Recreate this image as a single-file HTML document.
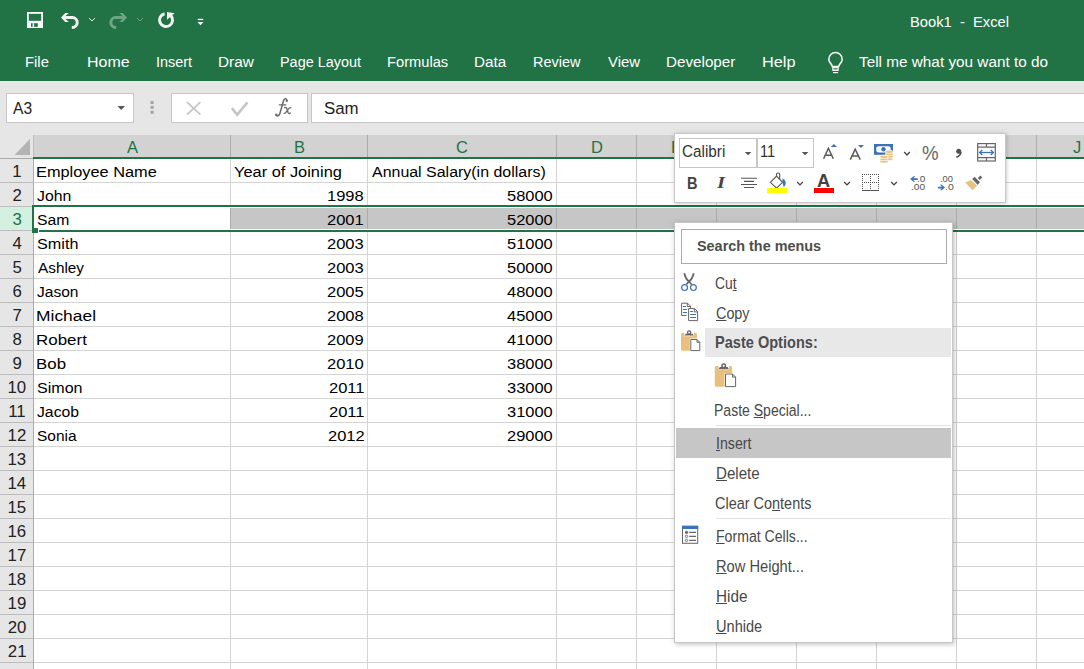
<!DOCTYPE html>
<html><head><meta charset="utf-8"><style>
html,body{margin:0;padding:0;width:1084px;height:669px;overflow:hidden;background:#fff;}
body{position:relative;font-family:"Liberation Sans",sans-serif;}
.a{position:absolute;}
.t{position:absolute;white-space:nowrap;line-height:1;transform-origin:0 0;}
u{text-decoration:underline;text-decoration-thickness:1px;text-underline-offset:1px;}
svg{overflow:visible}
</style></head><body>
<div class="a" style="left:0px;top:0px;width:1084px;height:81px;background:#217346;"></div>
<div class="a" style="left:0px;top:81px;width:1084px;height:54px;background:#e6e6e6;"></div>
<div class="a" style="left:6px;top:93px;width:128px;height:30px;background:#fff;box-sizing:border-box;border:1px solid #c6c6c6"></div>
<div class="a" style="left:171px;top:93px;width:137px;height:30px;background:#fff;box-sizing:border-box;border:1px solid #c6c6c6"></div>
<div class="a" style="left:311px;top:93px;width:789px;height:30px;background:#fff;box-sizing:border-box;border:1px solid #c6c6c6"></div>
<div class="a" style="left:0px;top:135px;width:1084px;height:534px;background:#fff;"></div>
<div class="a" style="left:0px;top:135px;width:33px;height:24px;background:#e6e6e6;"></div>
<div class="a" style="left:33px;top:135px;width:1051px;height:22px;background:#d2d2d2;"></div>
<div class="a" style="left:33px;top:157px;width:1051px;height:2px;background:#217346;"></div>
<div class="a" style="left:0px;top:159px;width:33px;height:510px;background:#e6e6e6;"></div>
<div class="a" style="left:0px;top:207px;width:33px;height:23px;background:#d3f0e0;"></div>
<div class="a" style="left:33px;top:135px;width:1px;height:22px;background:#bdbdbd;"></div>
<div class="a" style="left:33px;top:159px;width:1px;height:510px;background:#ababab;"></div>
<div class="a" style="left:0px;top:158px;width:33px;height:1px;background:#ababab;"></div>
<div class="a" style="left:230px;top:208px;width:854px;height:21px;background:#c6c6c6;"></div>
<div class="a" style="left:34px;top:182px;width:1050px;height:1px;background:#d4d4d4;"></div>
<div class="a" style="left:0px;top:182px;width:33px;height:1px;background:#bcbcbc;"></div>
<div class="a" style="left:34px;top:206px;width:1050px;height:1px;background:#d4d4d4;"></div>
<div class="a" style="left:0px;top:206px;width:33px;height:1px;background:#bcbcbc;"></div>
<div class="a" style="left:34px;top:230px;width:1050px;height:1px;background:#d4d4d4;"></div>
<div class="a" style="left:0px;top:230px;width:33px;height:1px;background:#bcbcbc;"></div>
<div class="a" style="left:34px;top:254px;width:1050px;height:1px;background:#d4d4d4;"></div>
<div class="a" style="left:0px;top:254px;width:33px;height:1px;background:#bcbcbc;"></div>
<div class="a" style="left:34px;top:278px;width:1050px;height:1px;background:#d4d4d4;"></div>
<div class="a" style="left:0px;top:278px;width:33px;height:1px;background:#bcbcbc;"></div>
<div class="a" style="left:34px;top:302px;width:1050px;height:1px;background:#d4d4d4;"></div>
<div class="a" style="left:0px;top:302px;width:33px;height:1px;background:#bcbcbc;"></div>
<div class="a" style="left:34px;top:326px;width:1050px;height:1px;background:#d4d4d4;"></div>
<div class="a" style="left:0px;top:326px;width:33px;height:1px;background:#bcbcbc;"></div>
<div class="a" style="left:34px;top:350px;width:1050px;height:1px;background:#d4d4d4;"></div>
<div class="a" style="left:0px;top:350px;width:33px;height:1px;background:#bcbcbc;"></div>
<div class="a" style="left:34px;top:374px;width:1050px;height:1px;background:#d4d4d4;"></div>
<div class="a" style="left:0px;top:374px;width:33px;height:1px;background:#bcbcbc;"></div>
<div class="a" style="left:34px;top:398px;width:1050px;height:1px;background:#d4d4d4;"></div>
<div class="a" style="left:0px;top:398px;width:33px;height:1px;background:#bcbcbc;"></div>
<div class="a" style="left:34px;top:422px;width:1050px;height:1px;background:#d4d4d4;"></div>
<div class="a" style="left:0px;top:422px;width:33px;height:1px;background:#bcbcbc;"></div>
<div class="a" style="left:34px;top:446px;width:1050px;height:1px;background:#d4d4d4;"></div>
<div class="a" style="left:0px;top:446px;width:33px;height:1px;background:#bcbcbc;"></div>
<div class="a" style="left:34px;top:470px;width:1050px;height:1px;background:#d4d4d4;"></div>
<div class="a" style="left:0px;top:470px;width:33px;height:1px;background:#bcbcbc;"></div>
<div class="a" style="left:34px;top:494px;width:1050px;height:1px;background:#d4d4d4;"></div>
<div class="a" style="left:0px;top:494px;width:33px;height:1px;background:#bcbcbc;"></div>
<div class="a" style="left:34px;top:518px;width:1050px;height:1px;background:#d4d4d4;"></div>
<div class="a" style="left:0px;top:518px;width:33px;height:1px;background:#bcbcbc;"></div>
<div class="a" style="left:34px;top:542px;width:1050px;height:1px;background:#d4d4d4;"></div>
<div class="a" style="left:0px;top:542px;width:33px;height:1px;background:#bcbcbc;"></div>
<div class="a" style="left:34px;top:566px;width:1050px;height:1px;background:#d4d4d4;"></div>
<div class="a" style="left:0px;top:566px;width:33px;height:1px;background:#bcbcbc;"></div>
<div class="a" style="left:34px;top:590px;width:1050px;height:1px;background:#d4d4d4;"></div>
<div class="a" style="left:0px;top:590px;width:33px;height:1px;background:#bcbcbc;"></div>
<div class="a" style="left:34px;top:614px;width:1050px;height:1px;background:#d4d4d4;"></div>
<div class="a" style="left:0px;top:614px;width:33px;height:1px;background:#bcbcbc;"></div>
<div class="a" style="left:34px;top:638px;width:1050px;height:1px;background:#d4d4d4;"></div>
<div class="a" style="left:0px;top:638px;width:33px;height:1px;background:#bcbcbc;"></div>
<div class="a" style="left:34px;top:662px;width:1050px;height:1px;background:#d4d4d4;"></div>
<div class="a" style="left:0px;top:662px;width:33px;height:1px;background:#bcbcbc;"></div>
<div class="a" style="left:230px;top:159px;width:1px;height:510px;background:#d4d4d4;"></div>
<div class="a" style="left:230px;top:135px;width:1px;height:22px;background:#ababab;"></div>
<div class="a" style="left:367px;top:159px;width:1px;height:510px;background:#d4d4d4;"></div>
<div class="a" style="left:367px;top:135px;width:1px;height:22px;background:#ababab;"></div>
<div class="a" style="left:556px;top:159px;width:1px;height:510px;background:#d4d4d4;"></div>
<div class="a" style="left:556px;top:135px;width:1px;height:22px;background:#ababab;"></div>
<div class="a" style="left:636px;top:159px;width:1px;height:510px;background:#d4d4d4;"></div>
<div class="a" style="left:636px;top:135px;width:1px;height:22px;background:#ababab;"></div>
<div class="a" style="left:716px;top:159px;width:1px;height:510px;background:#d4d4d4;"></div>
<div class="a" style="left:716px;top:135px;width:1px;height:22px;background:#ababab;"></div>
<div class="a" style="left:796px;top:159px;width:1px;height:510px;background:#d4d4d4;"></div>
<div class="a" style="left:796px;top:135px;width:1px;height:22px;background:#ababab;"></div>
<div class="a" style="left:876px;top:159px;width:1px;height:510px;background:#d4d4d4;"></div>
<div class="a" style="left:876px;top:135px;width:1px;height:22px;background:#ababab;"></div>
<div class="a" style="left:956px;top:159px;width:1px;height:510px;background:#d4d4d4;"></div>
<div class="a" style="left:956px;top:135px;width:1px;height:22px;background:#ababab;"></div>
<div class="a" style="left:1036px;top:159px;width:1px;height:510px;background:#d4d4d4;"></div>
<div class="a" style="left:1036px;top:135px;width:1px;height:22px;background:#ababab;"></div>
<div class="a" style="left:230px;top:207px;width:1px;height:23px;background:#fff;"></div>
<div class="a" style="left:230px;top:208px;width:1px;height:21px;background:#ababab;"></div>
<div class="a" style="left:367px;top:207px;width:1px;height:23px;background:#fff;"></div>
<div class="a" style="left:367px;top:208px;width:1px;height:21px;background:#ababab;"></div>
<div class="a" style="left:556px;top:207px;width:1px;height:23px;background:#fff;"></div>
<div class="a" style="left:556px;top:208px;width:1px;height:21px;background:#ababab;"></div>
<div class="a" style="left:636px;top:207px;width:1px;height:23px;background:#fff;"></div>
<div class="a" style="left:636px;top:208px;width:1px;height:21px;background:#ababab;"></div>
<div class="a" style="left:716px;top:207px;width:1px;height:23px;background:#fff;"></div>
<div class="a" style="left:716px;top:208px;width:1px;height:21px;background:#ababab;"></div>
<div class="a" style="left:796px;top:207px;width:1px;height:23px;background:#fff;"></div>
<div class="a" style="left:796px;top:208px;width:1px;height:21px;background:#ababab;"></div>
<div class="a" style="left:876px;top:207px;width:1px;height:23px;background:#fff;"></div>
<div class="a" style="left:876px;top:208px;width:1px;height:21px;background:#ababab;"></div>
<div class="a" style="left:956px;top:207px;width:1px;height:23px;background:#fff;"></div>
<div class="a" style="left:956px;top:208px;width:1px;height:21px;background:#ababab;"></div>
<div class="a" style="left:1036px;top:207px;width:1px;height:23px;background:#fff;"></div>
<div class="a" style="left:1036px;top:208px;width:1px;height:21px;background:#ababab;"></div>
<div class="a" style="left:32px;top:205px;width:1052px;height:2px;background:#217346;"></div>
<div class="a" style="left:32px;top:230px;width:1052px;height:2px;background:#217346;"></div>
<div class="a" style="left:32px;top:205px;width:2px;height:27px;background:#217346;"></div>
<div class="a" style="left:38px;top:228px;width:1px;height:5px;background:#fff;"></div>
<div class="a" style="left:32px;top:228px;width:6px;height:5px;background:#217346;"></div>
<svg class="a" style="left:0;top:135px" width="33" height="24"><polygon points="14.5,20 30,4 30,20" fill="#b4b4b4"/></svg>
<div class="a" style="left:674px;top:133px;width:332px;height:70px;background:#fff;z-index:9;box-sizing:border-box;border:1px solid #c8c8c8;box-shadow:0 0 6px rgba(0,0,0,0.10),1px 1px 3px rgba(0,0,0,0.12)"></div>
<div class="a" style="left:679px;top:138px;width:78px;height:30px;background:#fff;z-index:9;box-sizing:border-box;border:1px solid #c6c6c6"></div>
<div class="a" style="left:757px;top:138px;width:57px;height:30px;background:#fff;z-index:9;box-sizing:border-box;border:1px solid #c6c6c6"></div>
<div class="a" style="left:674px;top:222px;width:279px;height:421px;background:#fff;z-index:9;box-sizing:border-box;border:1px solid #c6c6c6;box-shadow:0 0 6px rgba(0,0,0,0.10),2px 2px 4px rgba(0,0,0,0.15)"></div>
<div class="a" style="left:681px;top:229px;width:266px;height:35px;background:#fff;z-index:9;box-sizing:border-box;border:1px solid #ababab"></div>
<div class="a" style="left:705px;top:328px;width:246px;height:29px;background:#e8e8e8;z-index:9"></div>
<div class="a" style="left:676px;top:428px;width:275px;height:30px;background:#c6c6c6;z-index:9"></div>
<div class="a" style="left:716px;top:425px;width:235px;height:1px;background:#e1e1e1;z-index:9"></div>
<div class="a" style="left:716px;top:518px;width:235px;height:1px;background:#e1e1e1;z-index:9"></div>
<svg class="a" style="left:0;top:0;z-index:2" width="1084" height="135" viewBox="0 0 1084 135">
<!-- save -->
<rect x="27.9" y="12.9" width="14.2" height="14.2" fill="none" stroke="#fff" stroke-width="1.8"/>
<rect x="28.5" y="20.8" width="13" height="6.5" fill="#fff"/>
<rect x="31" y="23.2" width="6.8" height="3.6" fill="#217346"/>
<rect x="32.6" y="23.2" width="1.5" height="3.6" fill="#fff"/>
<!-- undo -->
<polygon points="61,17.5 65.2,13.1 68.8,13.1 65.5,16 65.5,19 68.8,21.9 65.2,21.9" fill="#f2f2f2"/>
<path d="M64.5 17.6 H72.3 A4.9 4.9 0 0 1 72.3 27.4 H71.8" fill="none" stroke="#f2f2f2" stroke-width="3"/>
<path d="M89 18 L92 21 L95 18" fill="none" stroke="#e6e6e6" stroke-width="1"/>
<!-- redo faded -->
<g opacity="0.35">
<polygon points="127,17.5 122.8,13.1 119.2,13.1 122.5,16 122.5,19 119.2,21.9 122.8,21.9" fill="#fff"/>
<path d="M123.5 17.6 H115.7 A4.9 4.9 0 0 0 115.7 27.4 H116.2" fill="none" stroke="#fff" stroke-width="3"/>
<path d="M137 18 L140 21 L143 18" fill="none" stroke="#fff" stroke-width="1"/>
</g>
<!-- refresh -->
<path d="M164.6 13.7 A6.5 6.5 0 1 0 170.6 15.4" fill="none" stroke="#f2f2f2" stroke-width="3"/>
<polygon points="167,12.1 174.6,13.3 167,19.8" fill="#f2f2f2"/>
<!-- customize -->
<rect x="197.7" y="18.8" width="5.6" height="1.3" fill="#fff"/>
<polygon points="197.5,22 203.5,22 200.5,25.2" fill="#fff"/>
<!-- bulb -->
<g transform="translate(0,1)"><path d="M832.3 65.5 C832 63 828.8 61.5 828.8 58.2 A6.7 6.7 0 0 1 842.2 58.2 C842.2 61.5 839 63 838.7 65.5 Z" fill="none" stroke="#f2f2f2" stroke-width="1.6"/>
<rect x="832.2" y="66" width="6.6" height="4" fill="#f2f2f2"/>
<rect x="833.5" y="67.3" width="4" height="1.1" fill="#217346"/>
<rect x="833" y="71" width="5" height="1.2" fill="#f2f2f2"/>
</g>
<!-- name box dropdown -->
<polygon points="117.5,106 125,106 121.25,110" fill="#555"/>
<!-- dots -->
<rect x="150.5" y="101" width="3.2" height="3" fill="#a6a6a6"/>
<rect x="150.5" y="105.8" width="3.2" height="3" fill="#a6a6a6"/>
<rect x="150.5" y="110.8" width="3.2" height="3" fill="#a6a6a6"/>
<!-- X -->
<path d="M187 102.2 L200.4 114.6 M200.4 102.2 L187 114.6" stroke="#c6c6c6" stroke-width="1.8"/>
<!-- check -->
<path d="M231.8 108.2 L237.2 114.6 L247.4 102.3" fill="none" stroke="#c6c6c6" stroke-width="2.6"/>
</svg>
<svg class="a" style="left:0;top:0;z-index:2" width="400" height="135" viewBox="0 0 400 135">
<g fill="none" stroke="#6a6a6a" stroke-linecap="round">
<path d="M287 100.8 C286.8 98.5 284.6 97.9 283.6 100.6 L279.8 113.8 C279.2 116.2 276.6 116.5 276 114.8" stroke-width="1.5"/>
<path d="M279.3 104.9 H285.8" stroke-width="1.2"/>
<path d="M284.6 107.6 Q286.6 107.1 287.1 109.2 L287.9 112.2 Q288.5 114.2 290.2 113.1" stroke-width="1.4"/>
<path d="M290.9 107.8 Q289.7 107.3 287.8 109.9 L285.6 112.6 Q284.9 113.6 284.1 113.2" stroke-width="1.2"/>
</g>
<circle cx="286.7" cy="100.9" r="1.1" fill="#6a6a6a"/>
<circle cx="276.3" cy="114.6" r="1.2" fill="#6a6a6a"/>
</svg>
<svg class="a" style="left:0;top:0;z-index:11" width="1084" height="669" viewBox="0 0 1084 669">
<!-- dropdown triangles -->
<polygon points="744.8,152 751.4,152 748.1,155.3" fill="#555"/>
<polygon points="801.8,152 808.4,152 805.1,155.3" fill="#555"/>
<!-- grow/shrink A -->
<path d="M823.6 158.8 L828.4 148.3 L833.3 158.8 M825.3 155.2 H831.6" fill="none" stroke="#595959" stroke-width="1.5"/>
<polygon points="830.8,146.9 837,146.9 833.9,143.9" fill="#3b73b6"/>
<path d="M850.3 159.6 L855.2 149.2 L860.2 159.6 M852 156 H858.5" fill="none" stroke="#595959" stroke-width="1.5"/>
<polygon points="858,145.1 864,145.1 861,148" fill="#3b73b6"/>
<!-- accounting -->
<rect x="874" y="144" width="19" height="10.8" fill="#3b73b6"/>
<path d="M876.3 147.5 Q877.5 146.2 879 146.2 H888 Q889.5 146.2 890.6 147.5 V151.3 Q889.5 152.6 888 152.6 H879 Q877.5 152.6 876.3 151.3 Z" fill="#fff"/>
<circle cx="883.5" cy="149.3" r="2.2" fill="#3b73b6"/>
<g fill="#e8c17e" stroke="#fff" stroke-width="0.7">
<ellipse cx="889.2" cy="159" rx="4" ry="1.6"/>
<ellipse cx="889.2" cy="156.6" rx="4" ry="1.6"/>
<ellipse cx="889.2" cy="154.2" rx="4" ry="1.6"/>
<ellipse cx="889.2" cy="151.8" rx="4" ry="1.6"/>
<ellipse cx="884" cy="161.5" rx="4.2" ry="1.6"/>
<ellipse cx="884" cy="159.1" rx="4.2" ry="1.6"/>
<ellipse cx="884" cy="156.9" rx="4.2" ry="1.6"/>
</g>
<!-- chevrons -->
<g fill="none" stroke="#444" stroke-width="1.3">
<path d="M904.2 152 L907 155 L909.8 152"/>
<path d="M797.2 182 L800 184.9 L802.8 182"/>
<path d="M844.1 182 L847 184.9 L849.9 182"/>
<path d="M891.2 182 L894 184.9 L896.8 182"/>
</g>
<!-- wrap -->
<g fill="none" stroke="#666" stroke-width="1.2">
<rect x="977.7" y="143.6" width="17.6" height="17.4"/>
<path d="M977.7 147.2 H995.3 M977.7 157.7 H995.3 M986.5 143.6 V147.2 M986.5 157.7 V161"/>
</g>
<path d="M980 152.5 H993" stroke="#3b73b6" stroke-width="1.3"/>
<path d="M982.3 150 L979.6 152.5 L982.3 155 M990.7 150 L993.4 152.5 L990.7 155" fill="none" stroke="#3b73b6" stroke-width="1.3"/>
<!-- align center -->
<g stroke="#555" stroke-width="1.1">
<path d="M741 178.3 H757 M744 181.4 H754 M741 184.5 H757 M744 187.5 H754"/>
</g>
<!-- fill bucket -->
<polygon points="770.4,182.3 776.5,176 782.6,182.3 776.5,188.2" fill="#fff" stroke="#555" stroke-width="1.1"/>
<path d="M776.5 176 V174.6 A1.6 1.6 0 0 1 779.7 174.6 V179" fill="none" stroke="#555" stroke-width="1.1"/>
<path d="M782.5 178.6 Q786.5 180.5 785.5 184.5 L783.8 187.5 L782.5 182.3 Z" fill="#3b73b6"/>
<rect x="767" y="188" width="20" height="5" fill="#ffff00"/>
<!-- font color -->
<rect x="814" y="188" width="20" height="5" fill="#ff0000"/>
<!-- borders -->
<g fill="#555"><rect x="862" y="174" width="1" height="1"/><rect x="862" y="176" width="1" height="1"/><rect x="862" y="178" width="1" height="1"/><rect x="862" y="180" width="1" height="1"/><rect x="862" y="182" width="1" height="1"/><rect x="862" y="184" width="1" height="1"/><rect x="862" y="186" width="1" height="1"/><rect x="862" y="188" width="1" height="1"/><rect x="864" y="174" width="1" height="1"/><rect x="864" y="182" width="1" height="1"/><rect x="866" y="174" width="1" height="1"/><rect x="866" y="182" width="1" height="1"/><rect x="868" y="174" width="1" height="1"/><rect x="868" y="182" width="1" height="1"/><rect x="870" y="174" width="1" height="1"/><rect x="870" y="176" width="1" height="1"/><rect x="870" y="178" width="1" height="1"/><rect x="870" y="180" width="1" height="1"/><rect x="870" y="182" width="1" height="1"/><rect x="870" y="184" width="1" height="1"/><rect x="870" y="186" width="1" height="1"/><rect x="870" y="188" width="1" height="1"/><rect x="872" y="174" width="1" height="1"/><rect x="872" y="182" width="1" height="1"/><rect x="874" y="174" width="1" height="1"/><rect x="874" y="182" width="1" height="1"/><rect x="876" y="174" width="1" height="1"/><rect x="876" y="182" width="1" height="1"/><rect x="878" y="174" width="1" height="1"/><rect x="878" y="176" width="1" height="1"/><rect x="878" y="178" width="1" height="1"/><rect x="878" y="180" width="1" height="1"/><rect x="878" y="182" width="1" height="1"/><rect x="878" y="184" width="1" height="1"/><rect x="878" y="186" width="1" height="1"/><rect x="878" y="188" width="1" height="1"/><rect x="862" y="190" width="17" height="1"/></g>
<!-- decimal arrows -->
<g fill="#3b73b6">
<polygon points="910.2,179 913.5,176.2 915.3,176.2 913.3,178.2 917.8,178.2 917.8,179.9 913.3,179.9 915.3,181.8 913.5,181.8"/>
<polygon points="945,187.5 941.7,184.7 939.9,184.7 941.9,186.7 937.9,186.7 937.9,188.4 941.9,188.4 939.9,190.3 941.7,190.3"/>
</g>
<!-- comma -->
<circle cx="958.7" cy="151.3" r="2.5" fill="#505050"/>
<path d="M960.9 152 Q960.8 155.6 956.3 157.3" fill="none" stroke="#505050" stroke-width="1.7"/>
<!-- format painter -->
<polygon points="965.3,182.4 970.9,180.1 977.1,185.5 972.5,190.3" fill="#e8c17e"/>
<polygon points="972.2,178.9 974.6,176.8 980,182.3 977.6,184.7" fill="#666"/>
<polygon points="977.8,178.1 980.3,175.6 982.3,177.4 979.7,180" fill="#666"/>
<!-- scissors -->
<path d="M684.3 273.3 Q685.5 279 689 281.5 L686.2 284.5" fill="none" stroke="#666" stroke-width="1.8"/>
<path d="M693.7 273.3 Q692.5 279 689 281.5 L691.8 284.5" fill="none" stroke="#666" stroke-width="1.8"/>
<circle cx="684.6" cy="287.6" r="2.9" fill="none" stroke="#3b73b6" stroke-width="1.2"/>
<circle cx="693.4" cy="287.6" r="2.9" fill="none" stroke="#3b73b6" stroke-width="1.2"/>
<!-- copy -->
<path d="M686.5 315.5 H681.6 V303.2 H687.5 L690.6 306.3 V308.5" fill="none" stroke="#666" stroke-width="1"/>
<path d="M687.3 303.2 V306.5 H690.6" fill="none" stroke="#666" stroke-width="1"/>
<path d="M688.6 320.6 V308.6 H694.6 L697.6 311.6 V320.6 Z" fill="#fff" stroke="#666" stroke-width="1"/>
<path d="M694.3 308.6 V311.9 H697.6" fill="none" stroke="#666" stroke-width="1"/>
<g stroke="#3b73b6" stroke-width="1">
<path d="M683 306.5 H686 M683 309.5 H687 M683 312.5 H687"/>
<path d="M690.2 311.5 H693 M690.2 314.5 H696 M690.2 317.5 H696"/>
</g>
<!-- paste icon (left) -->
<path d="M681 334.2 Q681 332.8 682.3 332.8 H684.2 V336.2 H694 V332.8 H695.6 Q696.9 332.8 696.9 334.2 V350.8 H682.3 Q681 350.8 681 349.5 Z" fill="#e8bf7c"/>
<path d="M684.3 335.6 H693.9 L692.6 333.7 H685.6 Z" fill="#666"/>
<circle cx="689.1" cy="332.4" r="1.6" fill="#fff" stroke="#666" stroke-width="1.3"/>
<rect x="689.8" y="338.5" width="11" height="13" fill="#fff"/>
<path d="M690.8 350.6 V339.5 H697 L699.8 342.3 V350.6 Z" fill="#fff" stroke="#666" stroke-width="1"/>
<path d="M697 339.5 V342.3 H699.8" fill="none" stroke="#666" stroke-width="1"/>
<!-- paste option icon -->
<path d="M714.8 367.5 Q714.8 366 716.3 366 H718.4 V369.7 H729 V366 H730.7 Q732.2 366 732.2 367.5 V386.8 H716.3 Q714.8 386.8 714.8 385.3 Z" fill="#e8bf7c"/>
<path d="M718.4 369.2 H729 L727.6 367 H719.8 Z" fill="#666"/>
<circle cx="723.7" cy="365.8" r="1.8" fill="#fff" stroke="#666" stroke-width="1.4"/>
<rect x="724.5" y="373" width="12" height="14.8" fill="#fff"/>
<path d="M725.5 386.6 V374 H732.5 L735.6 377.1 V386.6 Z" fill="#fff" stroke="#666" stroke-width="1"/>
<path d="M732.5 374 V377.1 H735.6" fill="none" stroke="#666" stroke-width="1"/>
<!-- format cells -->
<rect x="682.5" y="526.3" width="15.2" height="17" fill="#fff" stroke="#666" stroke-width="1"/>
<rect x="682" y="525.8" width="16.2" height="3.2" fill="#3b73b6"/>
<g fill="none" stroke="#666" stroke-width="0.9">
<circle cx="686.5" cy="532.4" r="1.2" fill="#666"/>
<circle cx="686.5" cy="536.4" r="1.2"/>
<circle cx="686.5" cy="540.4" r="1.2"/>
<path d="M689.2 532.4 H696 M689.2 536.4 H696 M689.2 540.4 H696" stroke-width="1.1"/>
</g>
</svg>

<span class="t" style="left:910.12px;top:13.94px;font-size:15.51px;color:#ffffff;z-index:1;transform:scaleX(0.9496)">Book1&nbsp; -&nbsp; Excel</span>
<span class="t" style="left:24.51px;top:53.64px;font-size:15.51px;color:#ffffff;z-index:1;transform:scaleX(0.9565)">File</span>
<span class="t" style="left:87.02px;top:53.64px;font-size:15.51px;color:#ffffff;z-index:1;transform:scaleX(1.0292)">Home</span>
<span class="t" style="left:156.10px;top:53.64px;font-size:15.51px;color:#ffffff;z-index:1;transform:scaleX(0.9297)">Insert</span>
<span class="t" style="left:217.98px;top:53.64px;font-size:15.51px;color:#ffffff;z-index:1;transform:scaleX(0.9873)">Draw</span>
<span class="t" style="left:280.05px;top:53.64px;font-size:15.51px;color:#ffffff;z-index:1;transform:scaleX(0.9306)">Page Layout</span>
<span class="t" style="left:387.12px;top:53.64px;font-size:15.51px;color:#ffffff;z-index:1;transform:scaleX(0.9474)">Formulas</span>
<span class="t" style="left:474.28px;top:53.64px;font-size:15.51px;color:#ffffff;z-index:1;transform:scaleX(0.9848)">Data</span>
<span class="t" style="left:533.24px;top:53.64px;font-size:15.51px;color:#ffffff;z-index:1;transform:scaleX(0.9330)">Review</span>
<span class="t" style="left:608.15px;top:53.64px;font-size:15.51px;color:#ffffff;z-index:1;transform:scaleX(0.9613)">View</span>
<span class="t" style="left:666.48px;top:53.64px;font-size:15.51px;color:#ffffff;z-index:1;transform:scaleX(0.9817)">Developer</span>
<span class="t" style="left:761.90px;top:53.64px;font-size:15.51px;color:#ffffff;z-index:1;transform:scaleX(1.0504)">Help</span>
<span class="t" style="left:859.19px;top:53.64px;font-size:15.51px;color:#ffffff;z-index:1;transform:scaleX(0.9883)">Tell me what you want to do</span>
<span class="t" style="left:13.00px;top:101.17px;font-size:15.94px;color:#222;z-index:1;transform:scaleX(0.9781)">A3</span>
<span class="t" style="left:324.46px;top:101.17px;font-size:15.94px;color:#222;z-index:1;transform:scaleX(1.0573)">Sam</span>
<span class="t" style="left:35.89px;top:163.69px;font-size:15.22px;color:#000;z-index:1;transform:scaleX(1.0738)">Employee Name</span>
<span class="t" style="left:233.67px;top:163.69px;font-size:15.22px;color:#000;z-index:1;transform:scaleX(1.0773)">Year of Joining</span>
<span class="t" style="left:371.60px;top:163.69px;font-size:15.22px;color:#000;z-index:1;transform:scaleX(1.0479)">Annual Salary(in dollars)</span>
<span class="t" style="left:37.18px;top:187.69px;font-size:15.22px;color:#000;z-index:1;transform:scaleX(1.0394)">John</span>
<span class="t" style="left:327.41px;top:187.69px;font-size:15.22px;color:#000;z-index:1;transform:scaleX(1.0850)">1998</span>
<span class="t" style="left:506.97px;top:187.69px;font-size:15.22px;color:#000;z-index:1;transform:scaleX(1.0800)">58000</span>
<span class="t" style="left:36.71px;top:211.69px;font-size:15.22px;color:#000;z-index:1;transform:scaleX(1.0331)">Sam</span>
<span class="t" style="left:327.41px;top:211.69px;font-size:15.22px;color:#000;z-index:1;transform:scaleX(1.0850)">2001</span>
<span class="t" style="left:506.97px;top:211.69px;font-size:15.22px;color:#000;z-index:1;transform:scaleX(1.0800)">52000</span>
<span class="t" style="left:36.69px;top:235.69px;font-size:15.22px;color:#000;z-index:1;transform:scaleX(1.0638)">Smith</span>
<span class="t" style="left:327.41px;top:235.69px;font-size:15.22px;color:#000;z-index:1;transform:scaleX(1.0850)">2003</span>
<span class="t" style="left:506.97px;top:235.69px;font-size:15.22px;color:#000;z-index:1;transform:scaleX(1.0800)">51000</span>
<span class="t" style="left:37.50px;top:259.69px;font-size:15.22px;color:#000;z-index:1;transform:scaleX(1.0076)">Ashley</span>
<span class="t" style="left:327.41px;top:259.69px;font-size:15.22px;color:#000;z-index:1;transform:scaleX(1.0850)">2003</span>
<span class="t" style="left:506.97px;top:259.69px;font-size:15.22px;color:#000;z-index:1;transform:scaleX(1.0800)">50000</span>
<span class="t" style="left:37.19px;top:283.69px;font-size:15.22px;color:#000;z-index:1;transform:scaleX(1.0214)">Jason</span>
<span class="t" style="left:327.41px;top:283.69px;font-size:15.22px;color:#000;z-index:1;transform:scaleX(1.0850)">2005</span>
<span class="t" style="left:506.97px;top:283.69px;font-size:15.22px;color:#000;z-index:1;transform:scaleX(1.0800)">48000</span>
<span class="t" style="left:36.11px;top:307.69px;font-size:15.22px;color:#000;z-index:1;transform:scaleX(1.1450)">Michael</span>
<span class="t" style="left:327.41px;top:307.69px;font-size:15.22px;color:#000;z-index:1;transform:scaleX(1.0850)">2008</span>
<span class="t" style="left:506.97px;top:307.69px;font-size:15.22px;color:#000;z-index:1;transform:scaleX(1.0800)">45000</span>
<span class="t" style="left:36.14px;top:331.69px;font-size:15.22px;color:#000;z-index:1;transform:scaleX(1.1133)">Robert</span>
<span class="t" style="left:327.41px;top:331.69px;font-size:15.22px;color:#000;z-index:1;transform:scaleX(1.0850)">2009</span>
<span class="t" style="left:506.97px;top:331.69px;font-size:15.22px;color:#000;z-index:1;transform:scaleX(1.0800)">41000</span>
<span class="t" style="left:36.15px;top:355.69px;font-size:15.22px;color:#000;z-index:1;transform:scaleX(1.1084)">Bob</span>
<span class="t" style="left:327.24px;top:355.69px;font-size:15.22px;color:#000;z-index:1;transform:scaleX(1.0850)">2010</span>
<span class="t" style="left:506.97px;top:355.69px;font-size:15.22px;color:#000;z-index:1;transform:scaleX(1.0800)">38000</span>
<span class="t" style="left:36.70px;top:379.69px;font-size:15.22px;color:#000;z-index:1;transform:scaleX(1.0558)">Simon</span>
<span class="t" style="left:328.73px;top:379.69px;font-size:15.22px;color:#000;z-index:1;transform:scaleX(1.0850)">2011</span>
<span class="t" style="left:506.97px;top:379.69px;font-size:15.22px;color:#000;z-index:1;transform:scaleX(1.0800)">33000</span>
<span class="t" style="left:37.19px;top:403.69px;font-size:15.22px;color:#000;z-index:1;transform:scaleX(1.0348)">Jacob</span>
<span class="t" style="left:328.73px;top:403.69px;font-size:15.22px;color:#000;z-index:1;transform:scaleX(1.0850)">2011</span>
<span class="t" style="left:506.97px;top:403.69px;font-size:15.22px;color:#000;z-index:1;transform:scaleX(1.0800)">31000</span>
<span class="t" style="left:36.73px;top:427.69px;font-size:15.22px;color:#000;z-index:1;transform:scaleX(1.0158)">Sonia</span>
<span class="t" style="left:327.57px;top:427.69px;font-size:15.22px;color:#000;z-index:1;transform:scaleX(1.0850)">2012</span>
<span class="t" style="left:506.97px;top:427.69px;font-size:15.22px;color:#000;z-index:1;transform:scaleX(1.0800)">29000</span>
<span class="t" style="left:12.24px;top:163.93px;font-size:16.81px;color:#222;z-index:1;transform:scaleX(1.0000)">1</span>
<span class="t" style="left:12.49px;top:187.93px;font-size:16.81px;color:#222;z-index:1;transform:scaleX(1.0000)">2</span>
<span class="t" style="left:12.58px;top:211.93px;font-size:16.81px;color:#217346;z-index:1;transform:scaleX(1.0000)">3</span>
<span class="t" style="left:12.58px;top:235.93px;font-size:16.81px;color:#222;z-index:1;transform:scaleX(1.0000)">4</span>
<span class="t" style="left:12.49px;top:259.93px;font-size:16.81px;color:#222;z-index:1;transform:scaleX(1.0000)">5</span>
<span class="t" style="left:12.49px;top:283.93px;font-size:16.81px;color:#222;z-index:1;transform:scaleX(1.0000)">6</span>
<span class="t" style="left:12.49px;top:307.93px;font-size:16.81px;color:#222;z-index:1;transform:scaleX(1.0000)">7</span>
<span class="t" style="left:12.58px;top:331.93px;font-size:16.81px;color:#222;z-index:1;transform:scaleX(1.0000)">8</span>
<span class="t" style="left:12.49px;top:355.93px;font-size:16.81px;color:#222;z-index:1;transform:scaleX(1.0000)">9</span>
<span class="t" style="left:7.53px;top:379.93px;font-size:16.81px;color:#222;z-index:1;transform:scaleX(1.0000)">10</span>
<span class="t" style="left:8.21px;top:403.93px;font-size:16.81px;color:#222;z-index:1;transform:scaleX(1.0000)">11</span>
<span class="t" style="left:7.62px;top:427.93px;font-size:16.81px;color:#222;z-index:1;transform:scaleX(1.0000)">12</span>
<span class="t" style="left:7.53px;top:451.93px;font-size:16.81px;color:#222;z-index:1;transform:scaleX(1.0000)">13</span>
<span class="t" style="left:7.45px;top:475.93px;font-size:16.81px;color:#222;z-index:1;transform:scaleX(1.0000)">14</span>
<span class="t" style="left:7.53px;top:499.93px;font-size:16.81px;color:#222;z-index:1;transform:scaleX(1.0000)">15</span>
<span class="t" style="left:7.53px;top:523.93px;font-size:16.81px;color:#222;z-index:1;transform:scaleX(1.0000)">16</span>
<span class="t" style="left:7.62px;top:547.93px;font-size:16.81px;color:#222;z-index:1;transform:scaleX(1.0000)">17</span>
<span class="t" style="left:7.53px;top:571.93px;font-size:16.81px;color:#222;z-index:1;transform:scaleX(1.0000)">18</span>
<span class="t" style="left:7.62px;top:595.93px;font-size:16.81px;color:#222;z-index:1;transform:scaleX(1.0000)">19</span>
<span class="t" style="left:7.79px;top:619.93px;font-size:16.81px;color:#222;z-index:1;transform:scaleX(1.0000)">20</span>
<span class="t" style="left:7.87px;top:643.93px;font-size:16.81px;color:#222;z-index:1;transform:scaleX(1.0000)">21</span>
<span class="t" style="left:126.85px;top:139.13px;font-size:17.39px;color:#217346;z-index:1;transform:scaleX(0.9500)">A</span>
<span class="t" style="left:293.52px;top:139.13px;font-size:17.39px;color:#217346;z-index:1;transform:scaleX(0.9500)">B</span>
<span class="t" style="left:456.27px;top:139.13px;font-size:17.39px;color:#217346;z-index:1;transform:scaleX(0.9500)">C</span>
<span class="t" style="left:590.52px;top:139.13px;font-size:17.39px;color:#217346;z-index:1;transform:scaleX(0.9500)">D</span>
<span class="t" style="left:670.93px;top:139.13px;font-size:17.39px;color:#217346;z-index:1;transform:scaleX(0.9500)">E</span>
<span class="t" style="left:751.43px;top:139.13px;font-size:17.39px;color:#217346;z-index:1;transform:scaleX(0.9500)">F</span>
<span class="t" style="left:830.60px;top:139.13px;font-size:17.39px;color:#217346;z-index:1;transform:scaleX(0.9500)">G</span>
<span class="t" style="left:910.85px;top:139.13px;font-size:17.39px;color:#217346;z-index:1;transform:scaleX(0.9500)">H</span>
<span class="t" style="left:994.49px;top:139.13px;font-size:17.39px;color:#217346;z-index:1;transform:scaleX(0.9500)">I</span>
<span class="t" style="left:1073.08px;top:139.13px;font-size:17.39px;color:#217346;z-index:1;transform:scaleX(0.9500)">J</span>
<span class="t" style="left:697.17px;top:238.34px;font-size:15.51px;color:#4d4d4d;font-weight:bold;z-index:10;transform:scaleX(0.9295)">Search the menus</span>
<span class="t" style="left:714.80px;top:275.82px;font-size:15.65px;color:#484848;z-index:10;transform:scaleX(0.8885)">Cu<u>t</u></span>
<span class="t" style="left:715.50px;top:305.82px;font-size:15.65px;color:#484848;z-index:10;transform:scaleX(0.9186)"><u>C</u>opy</span>
<span class="t" style="left:714.38px;top:403.12px;font-size:15.65px;color:#484848;z-index:10;transform:scaleX(0.8961)">Paste <u>S</u>pecial...</span>
<span class="t" style="left:715.50px;top:436.02px;font-size:15.65px;color:#484848;z-index:10;transform:scaleX(0.9057)"><u>I</u>nsert</span>
<span class="t" style="left:715.50px;top:465.92px;font-size:15.65px;color:#484848;z-index:10;transform:scaleX(0.9662)"><u>D</u>elete</span>
<span class="t" style="left:714.78px;top:496.32px;font-size:15.65px;color:#484848;z-index:10;transform:scaleX(0.9243)">Clear Co<u>n</u>tents</span>
<span class="t" style="left:715.50px;top:529.32px;font-size:15.65px;color:#484848;z-index:10;transform:scaleX(0.9010)"><u>F</u>ormat Cells...</span>
<span class="t" style="left:715.50px;top:559.32px;font-size:15.65px;color:#484848;z-index:10;transform:scaleX(0.9373)"><u>R</u>ow Height...</span>
<span class="t" style="left:715.50px;top:589.12px;font-size:15.65px;color:#484848;z-index:10;transform:scaleX(0.9790)"><u>H</u>ide</span>
<span class="t" style="left:715.50px;top:618.92px;font-size:15.65px;color:#484848;z-index:10;transform:scaleX(0.9328)"><u>U</u>nhide</span>
<span class="t" style="left:715.48px;top:334.92px;font-size:15.65px;color:#4d4d4d;font-weight:bold;z-index:10;transform:scaleX(0.9310)">Paste Options:</span>
<span class="t" style="left:681.84px;top:144.12px;font-size:15.65px;color:#333;z-index:10;transform:scaleX(0.9771)">Calibri</span>
<span class="t" style="left:760.13px;top:143.92px;font-size:15.65px;color:#333;z-index:10;transform:scaleX(0.9338)">11</span>
<span class="t" style="left:686.58px;top:175.02px;font-size:16.23px;color:#444;font-weight:bold;z-index:12;transform:scaleX(0.8989)">B</span>
<span class="t" style="left:717.11px;top:175.02px;font-size:16.23px;color:#444;font-weight:bold;font-style:italic;font-family:'Liberation Serif';z-index:12;transform:scaleX(1.2751)">I</span>
<span class="t" style="left:817.35px;top:171.99px;font-size:18.26px;color:#444;font-weight:bold;z-index:12;transform:scaleX(0.9957)">A</span>
<span class="t" style="left:922.34px;top:143.23px;font-size:20.43px;color:#666;z-index:12;transform:scaleX(0.9131)">%</span>
<span class="t" style="left:916.90px;top:174.51px;font-size:8.41px;color:#555;z-index:12;transform:scaleX(1.1897)">.0</span>
<span class="t" style="left:911.29px;top:182.40px;font-size:9.71px;color:#555;z-index:12;transform:scaleX(1.0462)">.00</span>
<span class="t" style="left:940.46px;top:174.51px;font-size:8.41px;color:#555;z-index:12;transform:scaleX(1.1047)">.00</span>
<span class="t" style="left:944.55px;top:182.40px;font-size:9.71px;color:#555;z-index:12;transform:scaleX(1.0879)">.0</span>
</body></html>
